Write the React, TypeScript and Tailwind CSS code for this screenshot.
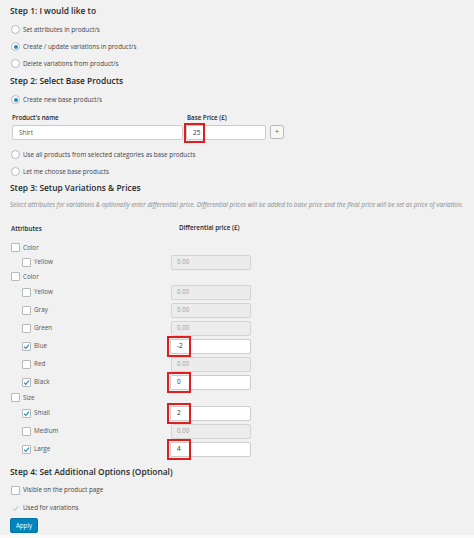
import React from "react";

const font = { fontFamily: '"Open Sans", "Noto Sans", sans-serif' };

function Radio({ checked }: { checked?: boolean }) {
  return (
    <span className="w-[9px] h-[9px] rounded-full border border-[#b4b9be] bg-white flex items-center justify-center shrink-0">
      {checked && <span className="w-[4px] h-[4px] rounded-full bg-[#1e8cbe]" />}
    </span>
  );
}

function Check({ checked }: { checked?: boolean }) {
  return (
    <span className="w-[9px] h-[9px] border border-[#b4b9be] bg-white flex items-center justify-center shrink-0 rounded-[1px]">
      {checked && (
        <svg width="7" height="7" viewBox="0 0 10 10">
          <path d="M1.5 5.2 L4 7.6 L8.6 2.2" fill="none" stroke="#1e8cbe" strokeWidth="1.6" />
        </svg>
      )}
    </span>
  );
}

function Heading({ children, cls }: { children: React.ReactNode; cls: string }) {
  return (
    <div className={`flex items-center pl-[10px] text-[8.4px] font-semibold text-[#23282d] ${cls}`}>{children}</div>
  );
}

function RadioRow({ label, checked }: { label: string; checked?: boolean }) {
  return (
    <div className="h-[17px] flex items-center pl-[11px] gap-[3px] text-[6.3px] text-[#444]">
      <Radio checked={checked} />
      <span>{label}</span>
    </div>
  );
}

function PriceInput({ value, highlight }: { value?: string; highlight?: boolean }) {
  if (value !== undefined) {
    return (
      <div className="relative ml-[170px] w-[81px] h-[15px] bg-white border border-[#ccc] rounded-[2px] flex items-center pl-[6px] text-[6.4px] text-[#333]">
        {value}
        {highlight && (
          <div className="absolute left-[-4px] top-[-4px] w-[24px] h-[21px] border-2 border-[#e01e1e]" />
        )}
      </div>
    );
  }
  return (
    <div className="ml-[171px] w-[80px] h-[15px] bg-[#ececec] border border-[#d4d4d4] rounded-[2px] flex items-center pl-[5px] text-[6.2px] text-[#a0a0a0]">
      0.00
    </div>
  );
}

function SubRow({ label, checked, value, h = "h-[18px]" }: { label: string; checked?: boolean; value?: string; h?: string }) {
  return (
    <div className={`${h} flex items-center text-[6.3px] text-[#555]`}>
      <div className="w-[0px] flex items-center">
        <div className="pl-[22px] flex items-center gap-[3px] whitespace-nowrap">
          <Check checked={checked} />
          <span>{label}</span>
        </div>
      </div>
      <PriceInput value={value} highlight={value !== undefined} />
    </div>
  );
}

function GroupRow({ label }: { label: string }) {
  return (
    <div className="h-[13px] flex items-center pl-[11px] gap-[3px] text-[6.3px] text-[#555]">
      <Check />
      <span>{label}</span>
    </div>
  );
}

export default function App() {
  return (
    <div className="w-[474px] h-[538px] bg-[#f1f1f1] flex flex-col" style={font}>
      <div className="flex flex-col pt-[1px]">
        <Heading cls="h-[20px]">Step 1: I would like to</Heading>
        <RadioRow label="Set attributes in product/s" />
        <RadioRow label="Create / update variations in product/s" checked />
        <RadioRow label="Delete variations from product/s" />
        <Heading cls="h-[19px]">Step 2: Select Base Products</Heading>
        <RadioRow label="Create new base product/s" checked />

        <div className="flex pl-[12px] pt-[4px] text-[6.2px] font-semibold text-[#23282d]">
          <div className="flex flex-col w-[171px]">
            <div className="h-[12px] flex items-center">Product's name</div>
            <div className="mt-[1px] h-[15px] w-[171px] bg-white border border-[#ccc] rounded-[2px] flex items-center pl-[6px] text-[6.4px] font-normal text-[#555]">
              Shirt
            </div>
          </div>
          <div className="flex flex-col ml-[3px]">
            <div className="h-[12px] flex items-center pl-[1px]">Base Price (£)</div>
            <div className="relative mt-[1px] h-[15px] w-[80px] bg-white border border-[#ccc] rounded-[2px] flex items-center pl-[6px] text-[6.4px] font-normal text-[#333]">
              25
              <div className="absolute left-[-3px] top-[-3px] w-[21px] h-[20px] border-2 border-[#e01e1e]" />
            </div>
          </div>
          <div className="flex flex-col ml-[4px]">
            <div className="h-[12px]" />
            <div className="mt-[1px] h-[14px] w-[14px] bg-[#f7f7f7] border border-[#bbb] rounded-[2px] flex items-center justify-center text-[7px] font-normal text-[#555]">
              +
            </div>
          </div>
        </div>

        <div className="mt-[6px]">
          <RadioRow label="Use all products from selected categories as base products" />
          <RadioRow label="Let me choose base products" />
        </div>
        <Heading cls="h-[17px]">Step 3: Setup Variations &amp; Prices</Heading>
        <div className="h-[16px] flex items-center pl-[10px] text-[6.35px] italic text-[#8a8a8a] whitespace-nowrap">
          Select attributes for variations &amp; optionally enter differential price. Differential prices will be added to base price and the final price will be set as price of variation.
        </div>
        <div className="mt-[7px] h-[18px] flex items-center text-[6.3px] font-semibold text-[#23282d]">
          <div className="w-[179px] pl-[11px]">Attributes</div>
          <div className="pb-[2px]">Differential price (£)</div>
        </div>

        <div className="mt-[3px] flex flex-col">
          <GroupRow label="Color" />
          <SubRow label="Yellow" h="h-[16px]" />
          <GroupRow label="Color" />
          <SubRow label="Yellow" />
          <SubRow label="Gray" />
          <SubRow label="Green" />
          <SubRow label="Blue" checked value="-2" />
          <SubRow label="Red" />
          <SubRow label="Black" checked value="0" />
          <GroupRow label="Size" />
          <SubRow label="Small" checked value="2" />
          <SubRow label="Medium" />
          <SubRow label="Large" checked value="4" />
        </div>

        <Heading cls="mt-[5px] h-[18px]">Step 4: Set Additional Options (Optional)</Heading>
        <div className="h-[18px] flex items-center pl-[11px] gap-[3px] text-[6.3px] text-[#444]">
          <Check />
          <span>Visible on the product page</span>
        </div>
        <div className="h-[18px] flex items-center pl-[11px] gap-[4px] text-[6.3px] text-[#444]">
          <svg width="7" height="7" viewBox="0 0 10 10" className="ml-[1px]">
            <path d="M1.5 5.2 L4 7.6 L8.6 2.2" fill="none" stroke="#9fb4c4" strokeWidth="1.3" />
          </svg>
          <span>Used for variations</span>
        </div>
        <div className="pl-[10px] mt-[1px]">
          <div className="w-[28px] h-[15px] bg-[#0085ba] border border-[#0073aa] rounded-[2px] flex items-center justify-center text-[6.2px] text-white">
            Apply
          </div>
        </div>
      </div>
      <div className="flex-1" />
      <div className="h-[3px] bg-[#fafafa]" />
    </div>
  );
}
